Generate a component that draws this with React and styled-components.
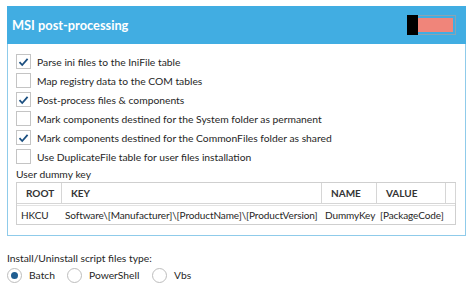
import React, { useState } from 'react';
import styled, { createGlobalStyle } from 'styled-components';

const Global = createGlobalStyle`
body {
  margin: 0;
  background: #ffffff;
  font-family: Lato, "Open Sans", sans-serif;
  font-size: 10.3px;
  color: #262626;
}
`

const Page = styled.div`
  width: 474px;
  height: 284px;
  padding: 6px 8px 0 7px;
  box-sizing: border-box;
`

const Panel = styled.div`
  border: 1px solid #8fcbea;
  border-top: none;
`

const Header = styled.div`
  height: 38px;
  background: #41ade2;
  display: flex;
  align-items: center;
  justify-content: space-between;
  padding: 0 10px 0 5px;
  margin: 0 -1px;
`

const Title = styled.div`
  color: #ffffff;
  font-size: 12.8px;
  font-weight: 700;
`

const Toggle = styled.div`
  width: 49px;
  height: 20px;
  display: flex;
  border: 1px solid #8aa3b3;
  border-left: none;
  box-sizing: border-box;
`

const ToggleKnob = styled.div`
  width: 11px;
  background: #000;
  margin-top: -1px;
  margin-bottom: -1px;
`

const ToggleFill = styled.div`
  flex: 1;
  margin: 2px 2px 2px 0;
  background: #f0857a;
`

const Body = styled.div`
  padding: 8px 9px 10px 8px;
`

const Row = styled.label`
  height: 19px;
  display: flex;
  align-items: center;
  gap: 6px;
`

const Box = styled.span`
  width: 13px;
  height: 13px;
  border: 1px solid #c4c4c4;
  background: #fff;
  display: flex;
  align-items: center;
  justify-content: center;
`

const Label = styled.div`
  height: 16px;
  display: flex;
  align-items: center;
`

const Table = styled.div`
  border: 1px solid #cfcfcf;
`

const Tr = styled.div`
  display: grid;
  grid-template-columns: 45px 260px 55px 69px 1fr;
  height: ${p => p.head ? '20px' : '19px'};
  border-bottom: ${p => p.head ? '1px solid #d6d6d6' : 'none'};
  margin-bottom: ${p => p.head ? '1px' : '0'};
`

const Th = styled.div`
  font-weight: 700;
  font-size: 10px;
  color: #333;
  display: flex;
  align-items: center;
  padding-left: 9px;
  border-right: 1px solid #d6d6d6;
`

const Td = styled.div`
  display: flex;
  align-items: center;
  padding-left: ${p => p.pad || 3}px;
  white-space: nowrap;
  font-size: 10px;
  letter-spacing: -0.1px;
  border-top: 1px solid #e3e3e3;
`

const Section = styled.div`
  padding: 14px 0 0 0;
`

const Radios = styled.div`
  display: flex;
  height: 18px;
  align-items: center;
`

const RadioItem = styled.label`
  display: flex;
  align-items: center;
  gap: 7px;
  width: ${p => p.w}px;
`

const Circle = styled.span`
  width: 13px;
  height: 13px;
  border-radius: 50%;
  border: 1px solid #bdbdbd;
  display: flex;
  align-items: center;
  justify-content: center;
  &::after {
    content: '';
    width: 7px;
    height: 7px;
    border-radius: 50%;
    background: ${p => p.on ? '#1f5e91' : 'transparent'};
  }
`

const Check = () => (
  <svg width="11" height="10" viewBox="0 0 11 10">
    <path d="M1.5 5.2 L4.2 8 L9.6 1.8" fill="none" stroke="#1b4f80" strokeWidth="1.8" />
  </svg>
)

const options = [
  ['Parse ini files to the IniFile table', true],
  ['Map registry data to the COM tables', false],
  ['Post-process files & components', true],
  ['Mark components destined for the System folder as permanent', false],
  ['Mark components destined for the CommonFiles folder as shared', true],
  ['Use DuplicateFile table for user files installation', false],
]

const App = () => {
  const [checks, setChecks] = useState(options.map(o => o[1]))
  const [script, setScript] = useState('Batch')

  return (
    <Page>
      <Global />
      <Panel>
        <Header>
          <Title>MSI post-processing</Title>
          <Toggle>
            <ToggleKnob />
            <ToggleFill />
          </Toggle>
        </Header>
        <Body>
          {options.map((o, i) => (
            <Row key={o[0]} onClick={() => setChecks(checks.map((c, j) => j === i ? !c : c))}>
              <Box>{checks[i] ? <Check /> : null}</Box>
              {o[0]}
            </Row>
          ))}
          <Label>User dummy key</Label>
          <Table>
            <Tr head>
              <Th>ROOT</Th>
              <Th>KEY</Th>
              <Th>NAME</Th>
              <Th>VALUE</Th>
              <Th />
            </Tr>
            <Tr>
              <Td pad={4}>HKCU</Td>
              <Td>Software\[Manufacturer]\[ProductName]\[ProductVersion]</Td>
              <Td>DummyKey</Td>
              <Td>[PackageCode]</Td>
              <Td />
            </Tr>
          </Table>
        </Body>
      </Panel>
      <Section>
        <Label>Install/Uninstall script files type:</Label>
        <Radios>
          {[['Batch', 60], ['PowerShell', 85], ['Vbs', 60]].map(([r, w]) => (
            <RadioItem key={r} w={w} onClick={() => setScript(r)}>
              <Circle on={script === r} />
              {r}
            </RadioItem>
          ))}
        </Radios>
      </Section>
    </Page>
  )
}

export default App;
